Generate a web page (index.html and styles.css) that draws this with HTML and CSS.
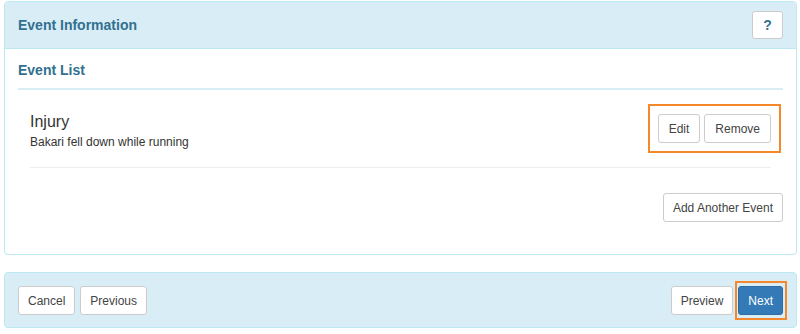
FILE: index.html
```html
<!DOCTYPE html>
<html lang="en">
<head>
    <meta charset="UTF-8">
    <title>Event Information</title>
    <link rel="stylesheet" href="styles.css">
</head>
<body>
    <div class="panel">
        <div class="panel-heading">
            <h3 class="panel-title">Event Information</h3>
            <button class="btn btn-help">?</button>
        </div>
        <div class="panel-body">
            <h4 class="section-title">Event List</h4>
            <div class="event-item">
                <div class="event-text">
                    <div class="event-name">Injury</div>
                    <div class="event-desc">Bakari fell down while running</div>
                </div>
                <div class="event-actions highlight">
                    <button class="btn">Edit</button>
                    <button class="btn">Remove</button>
                </div>
            </div>
            <div class="add-row">
                <button class="btn">Add Another Event</button>
            </div>
        </div>
    </div>

    <div class="panel footer-panel">
        <div class="footer-group">
            <button class="btn">Cancel</button>
            <button class="btn">Previous</button>
        </div>
        <div class="footer-group">
            <button class="btn">Preview</button>
            <button class="btn btn-primary highlight-next">Next</button>
        </div>
    </div>
</body>
</html>
```

FILE: styles.css
```css
body {
    margin: 0;
    padding: 1px 3px 0 4px;
    font-family: "Liberation Sans", Arial, sans-serif;
    font-size: 12px;
    color: #333;
    background-color: #fff;
}

.panel {
    border: 1px solid #bce8f1;
    border-radius: 4px;
    background-color: #fff;
}

.panel-heading {
    display: flex;
    align-items: center;
    justify-content: space-between;
    height: 46px;
    padding: 0 13px 0 13px;
    background-color: #d9edf7;
    border-bottom: 1px solid #bce8f1;
    border-radius: 3px 3px 0 0;
}

.panel-title {
    margin: 0;
    font-size: 14px;
    font-weight: bold;
    color: #31708f;
}

.btn {
    height: 29px;
    padding: 0 9px;
    font-family: "Liberation Sans", Arial, sans-serif;
    font-size: 12px;
    color: #444;
    background-color: #fff;
    border: 1px solid #ccc;
    border-radius: 3px;
    cursor: pointer;
}

.btn-help {
    width: 31px;
    height: 28px;
    padding: 0;
    font-size: 14px;
    font-weight: bold;
    color: #31708f;
}

.btn-primary {
    color: #fff;
    background-color: #337ab7;
    border-color: #2e6da4;
}

.panel-body {
    padding: 11px 13px 32px 13px;
}

.section-title {
    margin: 0;
    padding-bottom: 8px;
    font-size: 14px;
    line-height: 20px;
    font-weight: bold;
    color: #31708f;
    border-bottom: 2px solid #d9edf7;
}

.event-item {
    display: flex;
    align-items: flex-start;
    justify-content: space-between;
    margin: 0 12px 0 12px;
    padding: 22px 0 16px 0;
    border-bottom: 1px solid #eee;
}

.event-name {
    font-size: 16px;
    line-height: 20px;
}

.event-desc {
    margin-top: 2px;
    font-size: 12px;
    line-height: 17px;
}

.event-actions {
    display: flex;
    gap: 4px;
    margin-top: 2px;
}

.event-actions .btn {
    padding: 0 10px;
}

.highlight {
    outline: 2px solid #f5882a;
    outline-offset: 8px;
}

.add-row {
    display: flex;
    justify-content: flex-end;
    margin-top: 25px;
}

.footer-panel {
    display: flex;
    justify-content: space-between;
    margin-top: 17px;
    padding: 13px 13px 12px 13px;
    background-color: #d9edf7;
}

.footer-group {
    display: flex;
    gap: 5px;
}

.highlight-next {
    position: relative;
}

.highlight-next::after {
    content: "";
    position: absolute;
    top: -6px;
    right: -5px;
    bottom: -6px;
    left: -4px;
    border: 2px solid #f5882a;
}
```
